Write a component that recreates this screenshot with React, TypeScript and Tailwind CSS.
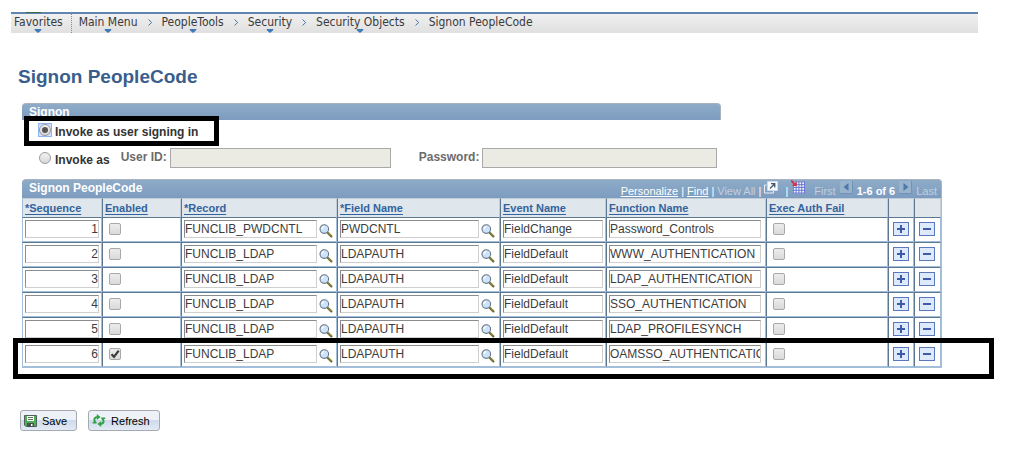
// Signon PeopleCode page: breadcrumb strip, the signon user group,
// the PeopleCode grid and the save / refresh toolbar.

import { useState } from "react";

type Row = {
  seq: number;
  enabled: boolean;
  record: string;
  field: string;
  event: string;
  fn: string;
};

const CRUMBS = ["Main Menu", "PeopleTools", "Security", "Security Objects", "Signon PeopleCode"];

const ROWS: Row[] = [
  { seq: 1, enabled: false, record: "FUNCLIB_PWDCNTL", field: "PWDCNTL", event: "FieldChange", fn: "Password_Controls" },
  { seq: 2, enabled: false, record: "FUNCLIB_LDAP", field: "LDAPAUTH", event: "FieldDefault", fn: "WWW_AUTHENTICATION" },
  { seq: 3, enabled: false, record: "FUNCLIB_LDAP", field: "LDAPAUTH", event: "FieldDefault", fn: "LDAP_AUTHENTICATION" },
  { seq: 4, enabled: false, record: "FUNCLIB_LDAP", field: "LDAPAUTH", event: "FieldDefault", fn: "SSO_AUTHENTICATION" },
  { seq: 5, enabled: false, record: "FUNCLIB_LDAP", field: "LDAPAUTH", event: "FieldDefault", fn: "LDAP_PROFILESYNCH" },
  { seq: 6, enabled: true, record: "FUNCLIB_LDAP", field: "LDAPAUTH", event: "FieldDefault", fn: "OAMSSO_AUTHENTICATION" },
];

const HEADERS = ["*Sequence", "Enabled", "*Record", "*Field Name", "Event Name", "Function Name", "Exec Auth Fail"];

const BAR = "bg-linear-to-b from-[#8eabc7] to-[#7c9cc0] border-t border-r border-[#a9b3bf] rounded-t text-white";
const CELL = "h-[25px] p-0 pl-[2px] pb-px border-l border-t border-r border-b border-l-[#5c7890] border-t-[#5c7890] border-r-[#a3bedb] border-b-[#a3bedb] first:border-l-[#a3bedb]";
const FIELD = "block h-[18px] min-w-0 text-[12px] leading-4 text-[#3c3c3c] bg-white border border-t-[#8c8c8c] border-l-[#8c8c8c] border-r-[#cfcfcf] border-b-[#cfcfcf] outline-none";

function DownMark() {
  return (
    <svg className="absolute left-1/2 -translate-x-1/2 bottom-0" width="7" height="4" viewBox="0 0 7 4" aria-hidden="true">
      <path d="M0 0h7v1L3.5 4 0 1z" fill="#3d7ab8" />
    </svg>
  );
}

function Breadcrumbs() {
  return (
    <nav
      aria-label="Breadcrumb"
      className="relative mt-3 ml-[11px] mr-[43px] h-[21px] border-t-2 border-[#5f85b0] bg-linear-to-b from-[#f0f0f0] to-[#e0e0e0] flex pl-[3px] text-[12px] leading-4 text-[#3a3a3a] font-['DejaVu_Sans_Condensed','Noto_Sans',sans-serif]"
    >
      <svg className="absolute left-[15px] -top-[2px]" width="15" height="1" viewBox="0 0 15 1" aria-hidden="true">
        <path d="M0 0h15v1H0z" fill="#41683f" />
      </svg>
      <a href="#favorites" className="relative mr-2">
        Favorites
        <DownMark />
      </a>
      <span className="border-l border-dotted border-[#888] mr-[7px]" />
      <ol className="flex gap-[9px]">
        {CRUMBS.map((crumb, i) => (
          <li key={crumb} className="flex gap-[9px]">
            {i > 0 && (
              <svg className="mt-[5px]" width="6" height="7" viewBox="0 0 6 7" fill="none" stroke="#4677a8" aria-hidden="true">
                <path d="M1.5.5l3.2 3-3.2 3" />
              </svg>
            )}
            <a href="#crumb" className="relative">
              {crumb}
              {i < CRUMBS.length - 1 && <DownMark />}
            </a>
          </li>
        ))}
      </ol>
    </nav>
  );
}

function Radio({ id, checked, onChange }: { id: string; checked: boolean; onChange: () => void }) {
  return (
    <span className={checked ? "grid size-[14px] place-items-center bg-[#cfe0fb] border border-[#8fb5f2]" : "grid size-[14px] place-items-center"}>
      <input
        id={id}
        type="radio"
        name="invoke"
        checked={checked}
        onChange={onChange}
        className="appearance-none col-start-1 row-start-1 size-3 rounded-full border border-[#999] bg-linear-to-b from-[#f2f2f2] to-[#d8d8d8]"
      />
      {checked && <span className="col-start-1 row-start-1 size-[6px] rounded-full bg-[#555] pointer-events-none" />}
    </span>
  );
}

function Check({ label, defaultChecked = false }: { label: string; defaultChecked?: boolean }) {
  return (
    <span className="grid size-3 ml-1">
      <input
        type="checkbox"
        aria-label={label}
        defaultChecked={defaultChecked}
        className="peer appearance-none col-start-1 row-start-1 size-3 rounded-xs border border-[#a8a8a8] bg-linear-to-b from-[#ececec] to-[#dadada]"
      />
      <svg className="hidden peer-checked:block col-start-1 row-start-1 pointer-events-none" width="12" height="12" viewBox="0 0 12 12" fill="none" stroke="#3a3a3a" strokeWidth="2.2" aria-hidden="true">
        <path d="M2.5 6.2l2.5 2.6L9.7 2.6" />
      </svg>
    </span>
  );
}

function Lookup({ label }: { label: string }) {
  return (
    <button type="button" aria-label={label} className="shrink-0 mt-1 ml-[2px] mr-[3px]">
      <svg width="14" height="14" viewBox="0 0 14 14" fill="none" aria-hidden="true">
        <path d="M8.6 8.6l3.8 3.8" stroke="#6e6a2c" strokeWidth="2.2" strokeLinecap="round" />
        <path d="M9 8.4l3.4 3.4" stroke="#c0b568" strokeWidth=".7" />
        <circle cx="5.3" cy="5.1" r="4.3" fill="#cbe4fb" stroke="#6b7685" strokeWidth="1.1" />
        <path d="M3 5.1a2.4 2.4 0 0 1 2.2-2.5" stroke="#fff" strokeWidth="1.4" />
      </svg>
    </button>
  );
}

function SquareButton({ label, plus = false }: { label: string; plus?: boolean }) {
  return (
    <button type="button" aria-label={label} className="grid place-items-center w-4 h-[14px] ml-[2px] border border-[#5a77bf] bg-[#dde9fd]">
      <svg width="8" height="8" viewBox="0 0 8 8" stroke="#3f5aa6" strokeWidth="2" aria-hidden="true">
        <path d={plus ? "M0 4h8M4 0v8" : "M0 4h8"} />
      </svg>
    </button>
  );
}

function PageArrow({ label, d }: { label: string; d: string }) {
  return (
    <button type="button" aria-label={label} className="mb-2">
      <svg width="13" height="13" viewBox="0 0 13 13" aria-hidden="true">
        <path d="M0 0h13v13H0z" fill="#9ab3cd" />
        <path d="M0 12.5h12.5V0" fill="none" stroke="#6f92b8" />
        <path d={d} fill="#4f79a8" />
      </svg>
    </button>
  );
}

function GridBar() {
  return (
    <div className={`${BAR} flex justify-between h-[19px] pl-[7px] pr-1`}>
      <h2 className="text-[12px] leading-4 font-bold">Signon PeopleCode</h2>
      <div className="flex items-center h-[22px] gap-[9px] text-[11px] leading-4 whitespace-nowrap">
        <div className="flex items-center gap-[3px]">
          <a href="#personalize" className="underline">Personalize</a>
          <span>|</span>
          <a href="#find" className="underline">Find</a>
          <span>|</span>
          <span className="text-[#c3cfdc]">View All</span>
          <span>|</span>
          <button type="button" aria-label="Popup" className="mb-2 mr-1">
            <svg width="14" height="13" viewBox="0 0 14 13" fill="none" aria-hidden="true">
              <path d="M2.5 4H.5v8h9v-2" stroke="#e9eff6" />
              <path d="M3.5.5h10v9h-10z" fill="#f7fafd" stroke="#cfdae6" />
              <path d="M6 7.5l4.5-4.5M7 2.7h3.8v3.8" stroke="#3f566e" strokeWidth="1.2" />
            </svg>
          </button>
          <span>|</span>
          <button type="button" aria-label="Download" className="mb-2">
            <svg width="14" height="14" viewBox="0 0 15 14" fill="none" aria-hidden="true">
              <path d="M2 1h13v13H2z" fill="#eef1ff" />
              <path d="M2.5 1v13M5.5 1v13M8.5 1v13M11.5 1v13M14.5 1v13M2 1.5h13M2 4.5h13M2 7.5h13M2 10.5h13M2 13.5h13" stroke="#6470cc" />
              <path d="M0 0l5 5" stroke="#d6323a" strokeWidth="2" />
              <path d="M6 1v5H1z" fill="#d6323a" />
            </svg>
          </button>
        </div>
        <div className="flex items-center gap-1">
          <span className="text-[#c3cfdc]">First</span>
          <PageArrow label="Previous" d="M8.5 2v8l-5-4z" />
          <span className="font-bold">1-6 of 6</span>
          <PageArrow label="Next" d="M4.5 2v8l5-4z" />
          <span className="text-[#c3cfdc]">Last</span>
        </div>
      </div>
    </div>
  );
}

function PeopleCodeGrid() {
  return (
    <section className="relative mt-[11px] ml-[22px] mr-[79px]">
      <GridBar />
      <table className="w-full table-fixed border-separate border-spacing-0 border-r border-b border-[#a3bedb]">
        <colgroup>
          <col className="w-[80px]" />
          <col className="w-[79px]" />
          <col className="w-[156px]" />
          <col className="w-[163px]" />
          <col className="w-[106px]" />
          <col className="w-[160px]" />
          <col />
          <col className="w-[26px]" />
          <col className="w-[27px]" />
        </colgroup>
        <thead>
          <tr>
            {HEADERS.map((h) => (
              <th key={h} className="h-[19px] p-0 pl-[2px] text-left text-[11px] leading-4 bg-[#dfe6ec] border-l border-t border-r border-l-[#5c7890] border-t-[#c3cdd8] border-r-[#c3cdd8] first:border-l-[#a3bedb]">
                <a href="#sort" className="text-[#33639c] underline underline-offset-2">{h}</a>
              </th>
            ))}
            <td className="bg-[#dfe6ec] border-l border-t border-r border-l-[#5c7890] border-t-[#c3cdd8] border-r-[#c3cdd8]" />
            <td className="bg-[#dfe6ec] border-l border-t border-r border-l-[#5c7890] border-t-[#c3cdd8] border-r-[#c3cdd8]" />
          </tr>
        </thead>
        <tbody>
          {ROWS.map((r) => (
            <tr key={r.seq}>
              <td className={CELL}>
                <input aria-label="Sequence" defaultValue={r.seq} className={`${FIELD} w-[74px] text-right`} />
              </td>
              <td className={CELL}>
                <Check label="Enabled" defaultChecked={r.enabled} />
              </td>
              <td className={CELL}>
                <div className="flex h-[18px]">
                  <input aria-label="Record" defaultValue={r.record} className={`${FIELD} flex-1`} />
                  <Lookup label="Look up record" />
                </div>
              </td>
              <td className={CELL}>
                <div className="flex h-[18px] pr-px">
                  <input aria-label="Field name" defaultValue={r.field} className={`${FIELD} flex-1`} />
                  <Lookup label="Look up field name" />
                </div>
              </td>
              <td className={`${CELL} pr-[2px]`}>
                <input aria-label="Event name" defaultValue={r.event} className={`${FIELD} w-full`} />
              </td>
              <td className={`${CELL} pr-1`}>
                <input aria-label="Function name" defaultValue={r.fn} className={`${FIELD} w-full`} />
              </td>
              <td className={CELL}>
                <Check label="Exec auth fail" />
              </td>
              <td className={CELL}>
                <SquareButton label="Add row" plus />
              </td>
              <td className={CELL}>
                <SquareButton label="Delete row" />
              </td>
            </tr>
          ))}
        </tbody>
      </table>
      {/* marker around the last row */}
      <div className="absolute -left-[9px] -right-[52px] -bottom-[11px] h-[41px] border-5 border-black pointer-events-none" />
    </section>
  );
}

function SignonGroup() {
  const [mode, setMode] = useState("user");
  return (
    <section className="mt-[14px] ml-[22px] w-fit text-[12px] leading-4 font-bold text-[#333]">
      <h2 className={`${BAR} h-[17px] pl-[7px]`}>Signon</h2>
      <div className="relative flex h-[28px] pl-4 pt-[3px] gap-[3px]">
        <Radio id="invoke-user" checked={mode === "user"} onChange={() => setMode("user")} />
        <label htmlFor="invoke-user" className="pt-[1px]">Invoke as user signing in</label>
        <div className="absolute left-[2px] -top-1 h-[30px] w-[195px] border-5 border-black pointer-events-none" />
      </div>
      <div className="flex pl-4 pr-1">
        <div className="flex gap-[3px] pt-[3px]">
          <Radio id="invoke-as" checked={mode === "as"} onChange={() => setMode("as")} />
          <label htmlFor="invoke-as" className="pt-[1px]">Invoke as</label>
        </div>
        <label htmlFor="user-id" className="ml-[11px] mr-[3px] pt-[1px] text-[#6b6b6b]">User ID:</label>
        <input id="user-id" disabled className="w-[221px] h-5 bg-[#ebebe4] border border-[#a9a9a9]" />
        <label htmlFor="password" className="ml-7 mr-[3px] pt-[1px] text-[#6b6b6b]">Password:</label>
        <input id="password" type="password" disabled className="w-[235px] h-5 bg-[#ebebe4] border border-[#a9a9a9]" />
      </div>
    </section>
  );
}

const ACTION = "flex items-center h-[21px] gap-[5px] pl-[3px] pr-[9px] text-[11px] leading-4 text-black border border-[#a5a9b0] rounded-[3px] bg-linear-to-b from-[#eef2f8] from-50% via-[#cfdbea] via-50% to-[#e2eaf4]";

export default function App() {
  return (
    <main className="flow-root bg-white font-['Liberation_Sans',Arial,sans-serif]">
      <Breadcrumbs />
      <h1 className="mt-8 ml-[18px] text-[19px] leading-6 font-bold text-[#3a5e8c]">Signon PeopleCode</h1>
      <SignonGroup />
      <PeopleCodeGrid />
      <div className="flex gap-[11px] mt-[42px] ml-5">
        <button type="button" className={ACTION}>
          <svg width="13" height="12" viewBox="0 0 13 12" aria-hidden="true">
            <path d="M.5.5h12v11H2L.5 10z" fill="#4fae55" stroke="#4e6355" />
            <path d="M3 1h7v5H3z" fill="#fff" />
            <path d="M4 2.5h5M4 4.5h5" stroke="#5a7a5e" />
            <path d="M3 8h7v4H3z" fill="#4a4f55" />
            <path d="M7 9h1.5v2H7z" fill="#fff" />
          </svg>
          Save
        </button>
        <button type="button" className={ACTION}>
          <svg width="14" height="13" viewBox="0 0 14 13" fill="none" stroke="#35a04a" strokeWidth="2" aria-hidden="true">
            <path d="M3.4 8.6Q.6 4.2 5 3" />
            <path d="M4.8 0v6L8.6 3z" fill="#35a04a" stroke="none" />
            <path d="M10.4 4.4Q13.4 8.8 9 10" />
            <path d="M9.2 7v6L5.4 10z" fill="#35a04a" stroke="none" />
            <path d="M.6 8.8h4M9.2 4.2h4" strokeWidth="1.4" />
          </svg>
          Refresh
        </button>
      </div>
    </main>
  );
}
